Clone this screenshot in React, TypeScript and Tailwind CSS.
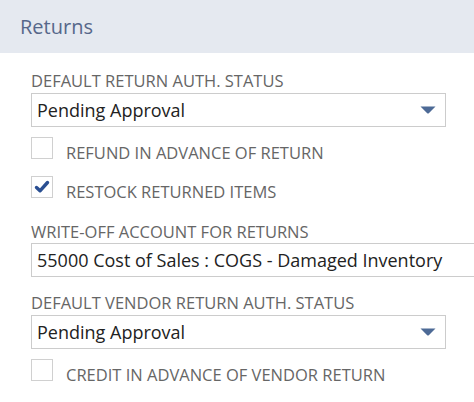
import React from "react";

function Label({ text, className = "" }) {
  return (
    <div className={`text-[16.5px] leading-[20px] text-[#666666] uppercase whitespace-nowrap ${className}`}>
      {text}
    </div>
  );
}

function Select({ value, className = "" }) {
  return (
    <div
      className={`h-[34px] w-[415px] border border-[#cccccc] flex items-center justify-between pl-[5px] pr-[9px] ${className}`}
    >
      <span className="text-[18px] text-[#222222]">{value}</span>
      <svg width="16" height="8" viewBox="0 0 16 8">
        <path d="M0.5 0.5 L15.5 0.5 L8.8 7.2 Q8 8 7.2 7.2 Z" fill="#4d6a96" />
      </svg>
    </div>
  );
}

function Checkbox({ checked = false, label, className = "" }) {
  return (
    <div className={`h-[22px] flex items-start ${className}`}>
      <div className="w-[22px] h-[22px] border border-[#d0d0d0] bg-white flex items-center justify-center flex-none">
        {checked && (
          <svg width="16" height="14" viewBox="0 0 16 14">
            <path
              d="M2.5 7.5 L6 10.8 L13.5 2.5"
              stroke="#2a4f92"
              strokeWidth="3.4"
              fill="none"
              strokeLinecap="round"
              strokeLinejoin="round"
            />
          </svg>
        )}
      </div>
      <div className="ml-[13px] mt-[6px] text-[16.5px] leading-[20px] text-[#666666] whitespace-nowrap">
        {label}
      </div>
    </div>
  );
}

export default function App() {
  return (
    <div
      className="w-[474px] h-[402px] bg-white overflow-hidden"
      style={{ fontFamily: '"Open Sans", "Noto Sans", sans-serif' }}
    >
      <div className="h-[53px] bg-[#e5e9f0] pl-[20px] flex items-center text-[20px] text-[#56678a]">
        Returns
      </div>
      <div className="pl-[31px] flex flex-col">
        <Label text="Default Return Auth. Status" className="mt-[18px]" />
        <Select value="Pending Approval" className="mt-[2px]" />
        <Checkbox label="REFUND IN ADVANCE OF RETURN" className="mt-[10px]" />
        <Checkbox checked label="RESTOCK RETURNED ITEMS" className="mt-[17px]" />
        <Label text="Write-off Account for Returns" className="mt-[24px]" />
        <div className="mt-[1px] h-[34px] w-[460px] border border-[#cccccc] flex items-center pl-[5px]">
          <span className="text-[18px] text-[#222222] whitespace-nowrap">
            55000 Cost of Sales : COGS - Damaged Inventory
          </span>
        </div>
        <Label text="Default Vendor Return Auth. Status" className="mt-[16px]" />
        <Select value="Pending Approval" className="mt-[2px]" />
        <Checkbox label="CREDIT IN ADVANCE OF VENDOR RETURN" className="mt-[10px]" />
      </div>
    </div>
  );
}
